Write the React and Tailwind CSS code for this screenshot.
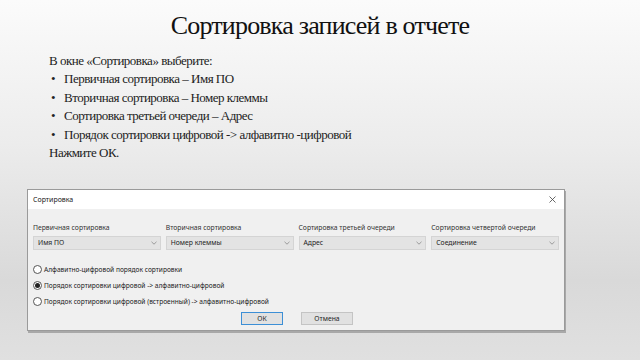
import React from "react";

const columns = [
  { label: "Первичная сортировка", value: "Имя ПО" },
  { label: "Вторичная сортировка", value: "Номер клеммы" },
  { label: "Сортировка третьей очереди", value: "Адрес" },
  { label: "Сортировка четвертой очереди", value: "Соединение" },
];

const options = [
  { text: "Алфавитно-цифровой порядок сортировки", checked: false },
  { text: "Порядок сортировки цифровой -> алфавитно-цифровой", checked: true },
  { text: "Порядок сортировки цифровой (встроенный) -> алфавитно-цифровой", checked: false },
];

const bullets = [
  "Первичная сортировка – Имя ПО",
  "Вторичная сортировка – Номер клеммы",
  "Сортировка третьей очереди – Адрес",
  "Порядок сортировки цифровой -> алфавитно -цифровой",
];

function Select({ value }) {
  return (
    <div className="flex h-[14px] items-center justify-between border border-[#d4d4d4] bg-[#e3e3e3] pl-[4px] pr-[3px]">
      <span className="text-[6.8px] text-[#222]">{value}</span>
      <svg width="6" height="4" viewBox="0 0 6 4">
        <path d="M0.5 0.8 L3 3.2 L5.5 0.8" fill="none" stroke="#888" strokeWidth="0.8" />
      </svg>
    </div>
  );
}

function Radio({ checked }) {
  return (
    <span className="flex h-[9px] w-[9px] items-center justify-center rounded-full border border-[#555] bg-white">
      {checked && <span className="h-[5px] w-[5px] rounded-full bg-[#222]" />}
    </span>
  );
}

export default function App() {
  return (
    <div className="h-[360px] w-[640px] overflow-hidden bg-[linear-gradient(180deg,#fbfbfb_0%,#ececec_40%,#d9d9d9_78%,#e0e0e0_100%)]">
      <h1 className="pt-[6px] text-center font-['Liberation_Serif','Times_New_Roman',serif] text-[26px] leading-[40px] tracking-[-0.8px] text-[#111]">
        Сортировка записей в отчете
      </h1>

      <div className="ml-[49px] mt-[6px] font-['Liberation_Serif','Times_New_Roman',serif] text-[13px] leading-[18.4px] tracking-[-0.5px] text-[#222]">
        <div>В окне «Сортировка» выберите:</div>
        {bullets.map((b) => (
          <div key={b} className="flex">
            <span className="w-[15px] pl-[2px]">•</span>
            <span>{b}</span>
          </div>
        ))}
        <div>Нажмите ОК.</div>
      </div>

      <div className="ml-[27px] mt-[27px] w-[538px] border border-[#9a9a9a] bg-[#f0f0f0] font-['Noto_Sans','Open_Sans',sans-serif] shadow-[1px_2px_0_#a8a8a8]">
        <div className="flex h-[19px] items-center justify-between bg-white pl-[5px] pr-[8px]">
          <span className="text-[7px] text-[#222]">Сортировка</span>
          <svg width="7" height="7" viewBox="0 0 7 7">
            <path d="M0.5 0.5 L6.5 6.5 M6.5 0.5 L0.5 6.5" stroke="#444" strokeWidth="0.8" />
          </svg>
        </div>

        <div className="px-[5px] pt-[14px]">
          <div className="grid grid-cols-4 gap-x-[5px]">
            {columns.map((c) => (
              <div key={c.label}>
                <div className="mb-[4px] text-[6.8px] leading-[9px] text-[#333]">{c.label}</div>
                <Select value={c.value} />
              </div>
            ))}
          </div>

          <div className="mt-[15px] flex flex-col gap-[7px]">
            {options.map((o) => (
              <div key={o.text} className="flex items-center gap-[2px]">
                <Radio checked={o.checked} />
                <span className="text-[6.6px] leading-[9px] text-[#222]">{o.text}</span>
              </div>
            ))}
          </div>

          <div className="ml-[208px] mt-[6px] flex gap-[18px] pb-[5px]">
            <button className="h-[13px] w-[42px] border border-[#3c8fd6] bg-[#e1e1e1] text-[6.8px] text-[#222]">
              ОК
            </button>
            <button className="h-[13px] w-[52px] border border-[#c4c4c4] bg-[#e1e1e1] text-[6.8px] text-[#222]">
              Отмена
            </button>
          </div>
        </div>
      </div>
    </div>
  );
}
